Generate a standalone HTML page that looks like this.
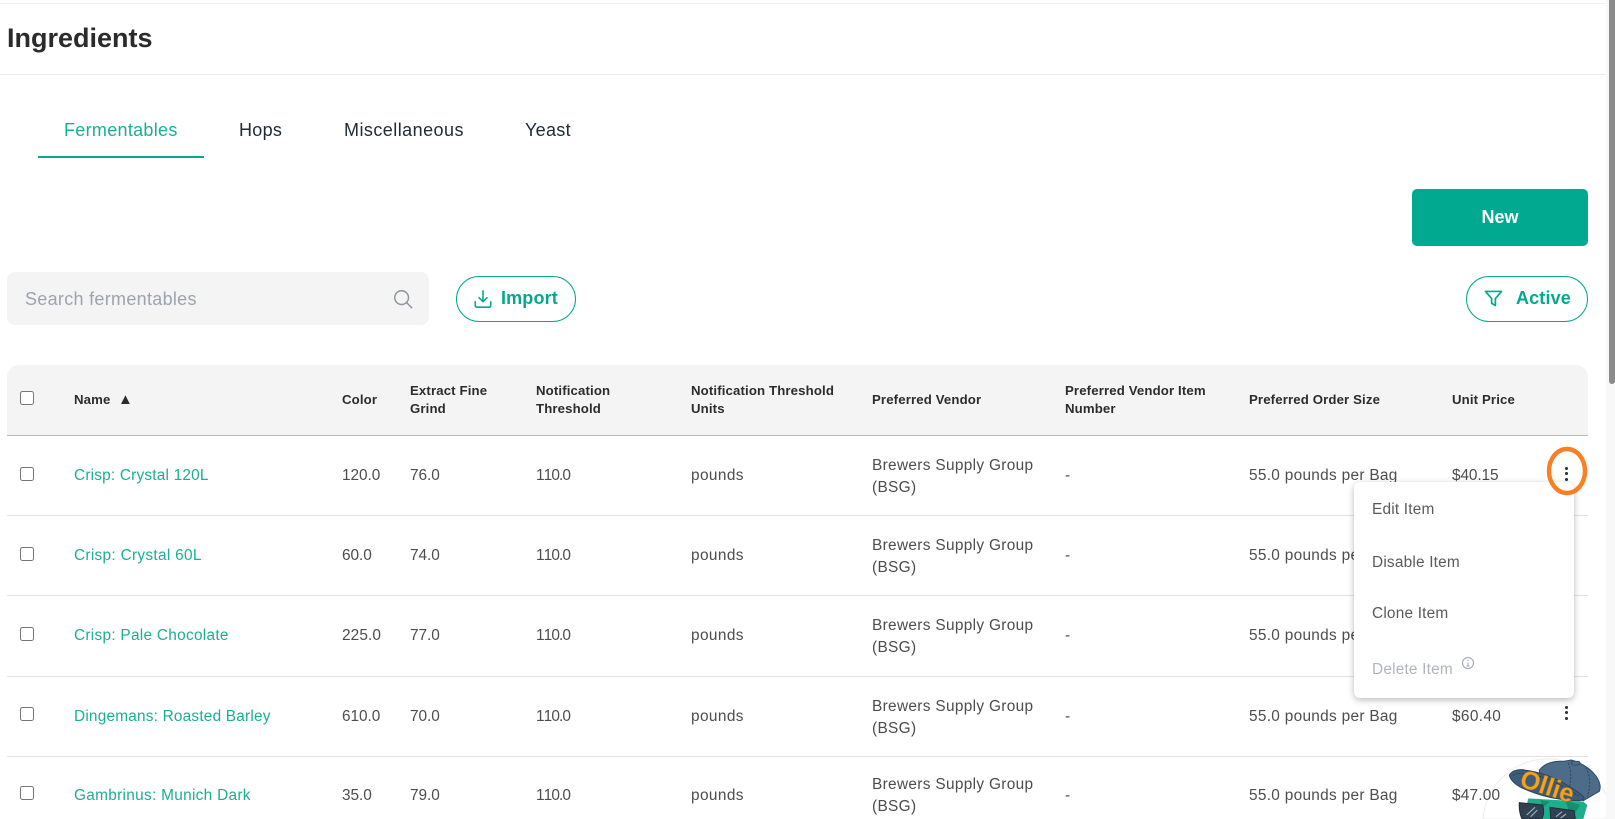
<!DOCTYPE html>
<html><head><meta charset="utf-8"><title>Ingredients</title>
<style>
html,body{margin:0;padding:0;background:#fff;overflow:hidden}
body{width:1615px;height:819px;position:relative;font-family:"Liberation Sans",sans-serif;color:#4a4a4a}
.a{position:absolute;white-space:nowrap}
.c{position:absolute;white-space:nowrap;font-size:15.4px;letter-spacing:.2px;line-height:22px;color:#4d4d4d}
.l{color:#1bae96;letter-spacing:.2px}
.v{letter-spacing:.33px}
.p{letter-spacing:.4px}
.s{letter-spacing:.3px}
.n{letter-spacing:-.05px}
.t{letter-spacing:-.9px;font-kerning:none}
.u{letter-spacing:-.1px}
.h{position:absolute;white-space:nowrap;font-size:13.2px;font-weight:bold;line-height:18px;color:#2c2c2c;letter-spacing:.14px}
.line{position:absolute;left:7px;width:1581px;height:1px;background:#e2e2e2}
.cb{position:absolute;left:20px;width:11.500px;height:11.500px;border:1px solid #767676;border-radius:2.500px;background:#fff}
.m{position:absolute;left:1372px;font-size:15.4px;letter-spacing:.2px;line-height:20px;color:#5a5a5a;white-space:nowrap}
.dot{position:absolute;width:3.200px;height:3.200px;border-radius:50%;background:#2c2c2c}
.tab{position:absolute;white-space:nowrap;top:119px;font-size:18px;letter-spacing:.3px;line-height:22px;color:#1f2a37}
</style></head><body>
<div class="a" style="left:0;top:3px;width:1606px;height:1px;background:#f0f0f0"></div>
<div class="a" style="left:7px;top:21px;font-size:27px;font-weight:bold;line-height:34px;color:#2b2b2b">Ingredients</div>
<div class="a" style="left:0;top:74px;width:1606px;height:1px;background:#ececec"></div>

<div class="tab" style="left:64px;color:#1bae96">Fermentables</div>
<div class="tab" style="left:239px">Hops</div>
<div class="tab" style="left:344px;letter-spacing:.45px">Miscellaneous</div>
<div class="tab" style="left:525px">Yeast</div>
<div class="a" style="left:38px;top:156px;width:166px;height:2px;background:#00a98f"></div>

<div class="a" style="left:1412px;top:189px;width:176px;height:57px;border-radius:5px;background:#00a98f;color:#fff;font-size:18px;font-weight:bold;line-height:57px;text-align:center">New</div>

<div class="a" style="left:7px;top:272px;width:422px;height:53px;border-radius:8px;background:#f4f4f4"></div>
<div class="a" style="left:25px;top:288px;font-size:18px;letter-spacing:.3px;line-height:22px;color:#9ca3af">Search fermentables</div>
<svg class="a" style="left:392px;top:288px" width="22" height="22" viewBox="0 0 24 24" fill="none" stroke="#8e949b" stroke-width="1.600" stroke-linecap="round"><circle cx="10.500" cy="10.500" r="7.500"/><path d="M16 16L21.500 21.500"/></svg>

<div class="a" style="left:456px;top:276px;width:118px;height:44px;border:1px solid #00a98f;border-radius:23px"></div>
<svg class="a" style="left:473px;top:289px" width="20" height="20" viewBox="0 0 22 22" fill="none" stroke="#00a98f" stroke-width="1.700" stroke-linecap="round" stroke-linejoin="round"><path d="M11 2V14M6.500 9.500L11 14L15.500 9.500M2.500 14V18Q2.500 20 4.500 20H17.500Q19.500 20 19.500 18V14"/></svg>
<div class="a" style="left:501px;top:287px;font-size:18px;font-weight:bold;line-height:22px;color:#00a98f;letter-spacing:.15px">Import</div>

<div class="a" style="left:1466px;top:276px;width:120px;height:44px;border:1px solid #00a98f;border-radius:23px"></div>
<svg class="a" style="left:1484px;top:290px" width="19" height="17" viewBox="0 0 20 18" fill="none" stroke="#00a98f" stroke-width="1.800" stroke-linejoin="round"><path d="M1.500 1.500H18.500L12 9V16.500L8 14V9Z"/></svg>
<div class="a" style="left:1516px;top:287px;font-size:18px;font-weight:bold;line-height:22px;color:#00a98f;letter-spacing:.15px">Active</div>

<!-- table header -->
<div class="a" style="left:7px;top:365px;width:1581px;height:70px;border-radius:12px 12px 0 0;background:#f4f4f4;border-bottom:1px solid #b9b9b9"></div>
<div class="cb" style="top:391px"></div>
<div class="h" style="left:74px;top:391px">Name</div>
<div class="h" style="left:118px;top:391px;font-size:15px">▲</div>
<div class="h" style="left:342px;top:391px">Color</div>
<div class="h" style="left:410px;top:382px">Extract Fine<br>Grind</div>
<div class="h" style="left:536px;top:382px">Notification<br>Threshold</div>
<div class="h" style="left:691px;top:382px">Notification Threshold<br>Units</div>
<div class="h" style="left:872px;top:391px">Preferred Vendor</div>
<div class="h" style="left:1065px;top:382px">Preferred Vendor Item<br>Number</div>
<div class="h" style="left:1249px;top:391px">Preferred Order Size</div>
<div class="h" style="left:1452px;top:391px">Unit Price</div>

<div class="line" style="top:515px"></div>
<div class="line" style="top:595px"></div>
<div class="line" style="top:676px"></div>
<div class="line" style="top:756px"></div>

<!-- row 1 -->
<div class="cb" style="top:467px"></div>
<div class="c l" style="left:74px;top:465px">Crisp: Crystal 120L</div>
<div class="c n" style="left:342px;top:465px">120.0</div>
<div class="c n" style="left:410px;top:465px">76.0</div>
<div class="c t" style="left:536px;top:465px">110.0</div>
<div class="c p" style="left:691px;top:465px">pounds</div>
<div class="c v" style="left:872px;top:455px">Brewers Supply Group<br>(BSG)</div>
<div class="c" style="left:1065px;top:465px">-</div>
<div class="c s" style="left:1249px;top:465px">55.0 pounds per Bag</div>
<div class="c u" style="left:1452px;top:465px">$40.15</div>

<!-- row 2 -->
<div class="cb" style="top:547px"></div>
<div class="c l" style="left:74px;top:545px;letter-spacing:.3px">Crisp: Crystal 60L</div>
<div class="c n" style="left:342px;top:545px">60.0</div>
<div class="c n" style="left:410px;top:545px">74.0</div>
<div class="c t" style="left:536px;top:545px">110.0</div>
<div class="c p" style="left:691px;top:545px">pounds</div>
<div class="c v" style="left:872px;top:535px">Brewers Supply Group<br>(BSG)</div>
<div class="c" style="left:1065px;top:545px">-</div>
<div class="c s" style="left:1249px;top:545px">55.0 pounds per Bag</div>

<!-- row 3 -->
<div class="cb" style="top:627px"></div>
<div class="c l" style="left:74px;top:625px;letter-spacing:.28px">Crisp: Pale Chocolate</div>
<div class="c n" style="left:342px;top:625px;letter-spacing:.1px">225.0</div>
<div class="c n" style="left:410px;top:625px">77.0</div>
<div class="c t" style="left:536px;top:625px">110.0</div>
<div class="c p" style="left:691px;top:625px">pounds</div>
<div class="c v" style="left:872px;top:615px">Brewers Supply Group<br>(BSG)</div>
<div class="c" style="left:1065px;top:625px">-</div>
<div class="c s" style="left:1249px;top:625px">55.0 pounds per Bag</div>

<!-- row 4 -->
<div class="cb" style="top:707px"></div>
<div class="c l" style="left:74px;top:706px;letter-spacing:.2px">Dingemans: Roasted Barley</div>
<div class="c n" style="left:342px;top:706px">610.0</div>
<div class="c n" style="left:410px;top:706px">70.0</div>
<div class="c t" style="left:536px;top:706px">110.0</div>
<div class="c p" style="left:691px;top:706px">pounds</div>
<div class="c v" style="left:872px;top:696px">Brewers Supply Group<br>(BSG)</div>
<div class="c" style="left:1065px;top:706px">-</div>
<div class="c s" style="left:1249px;top:706px">55.0 pounds per Bag</div>
<div class="c" style="left:1452px;top:706px;letter-spacing:.35px">$60.40</div>

<!-- row 5 -->
<div class="cb" style="top:786px"></div>
<div class="c l" style="left:74px;top:785px;letter-spacing:.3px">Gambrinus: Munich Dark</div>
<div class="c n" style="left:342px;top:785px">35.0</div>
<div class="c n" style="left:410px;top:785px">79.0</div>
<div class="c t" style="left:536px;top:785px">110.0</div>
<div class="c p" style="left:691px;top:785px">pounds</div>
<div class="c v" style="left:872px;top:774px">Brewers Supply Group<br>(BSG)</div>
<div class="c" style="left:1065px;top:785px">-</div>
<div class="c s" style="left:1249px;top:785px">55.0 pounds per Bag</div>

<!-- kebabs -->
<div class="dot" style="left:1565px;top:466.500px"></div>
<div class="dot" style="left:1565px;top:472px"></div>
<div class="dot" style="left:1565px;top:477.500px"></div>
<div class="dot" style="left:1565px;top:705.500px"></div>
<div class="dot" style="left:1565px;top:711px"></div>
<div class="dot" style="left:1565px;top:716.500px"></div>

<!-- menu -->
<div class="a" style="left:1354px;top:482px;width:220px;height:216px;border-radius:6px;background:#fff;box-shadow:0 2px 7px rgba(0,0,0,.28)"></div>
<div class="m" style="top:499.500px">Edit Item</div>
<div class="m" style="top:552.500px">Disable Item</div>
<div class="m" style="top:604px">Clone Item</div>
<div class="m" style="top:659.500px;color:#b0b5bd">Delete Item</div>
<svg class="a" style="left:1461px;top:656px" width="14" height="14" viewBox="0 0 14 14" fill="none" stroke="#aab0b8"><circle cx="7" cy="7" r="5.500" stroke-width="1.200"/><path d="M7 6.500V10M5.600 10H8.400M7 3.800V5" stroke-width="1.200"/></svg>

<!-- orange annotation -->
<svg class="a" style="left:1544px;top:444px" width="46" height="54"><ellipse cx="23" cy="27" rx="18" ry="22" fill="none" stroke="#fb7d24" stroke-width="4.400"/></svg>

<!-- mascot -->
<svg class="a" style="left:1470px;top:750px" width="140" height="69" viewBox="-90 0 420 207">
<path d="M-51 207A195 195 0 0 1 330 165V207Z" fill="#fff" stroke="#ececec" stroke-width="3"/>
<path d="M85 145L250 155L262 165L250 207H70Z" fill="#1fae8c"/>
<path d="M195 150L215 205L240 165ZM120 150L130 172L150 155Z" fill="#12906f"/>
<path d="M58 158L128 165Q135 190 125 207H66Q56 185 58 158Z" fill="#2f4152" stroke="#1f2d3b" stroke-width="3"/>
<path d="M150 172L222 182L226 207H152Z" fill="#2f4152" stroke="#1f2d3b" stroke-width="3"/>
<path d="M80 195L105 172M92 200L112 180M168 200L186 185M182 204L198 192" stroke="#9fadb9" stroke-width="3.500"/>
<path d="M118 60Q140 32 190 34L214 30Q262 44 288 78Q306 104 298 124L250 152L120 90Z" fill="#4c6c8a" stroke="#2f4a62" stroke-width="3"/>
<rect x="214" y="34" width="26" height="11" rx="5" fill="#4c6c8a" stroke="#2f4a62" stroke-width="2.500"/>
<path d="M205 38Q220 80 205 120M258 52Q278 92 262 140" fill="none" stroke="#2f4a62" stroke-width="3" stroke-dasharray="7 4"/>
<path d="M28 76Q36 60 64 59Q140 66 205 108Q240 128 252 142Q250 154 232 152Q160 150 96 126Q36 106 28 76Z" fill="#3d5c79" stroke="#2b445a" stroke-width="3"/>
<path d="M40 76Q52 68 80 70Q150 80 238 140" fill="none" stroke="#223a4f" stroke-width="2.500" stroke-dasharray="5 4"/>
<text x="56" y="108" transform="rotate(18 56 108)" font-family="Liberation Sans,sans-serif" font-size="76" font-weight="bold" fill="#f2a324" stroke="#b8740f" stroke-width="1.500">Ollie</text>
</svg>
<div class="c" style="left:1452px;top:785px;letter-spacing:.2px">$47.00</div>

<!-- scrollbar -->
<div class="a" style="left:1606px;top:0;width:9px;height:819px;background:#f8f8f8"></div>
<div class="a" style="left:1609px;top:0;width:6px;height:384px;border-radius:0 0 3px 3px;background:#8b8b8b"></div>
</body></html>
